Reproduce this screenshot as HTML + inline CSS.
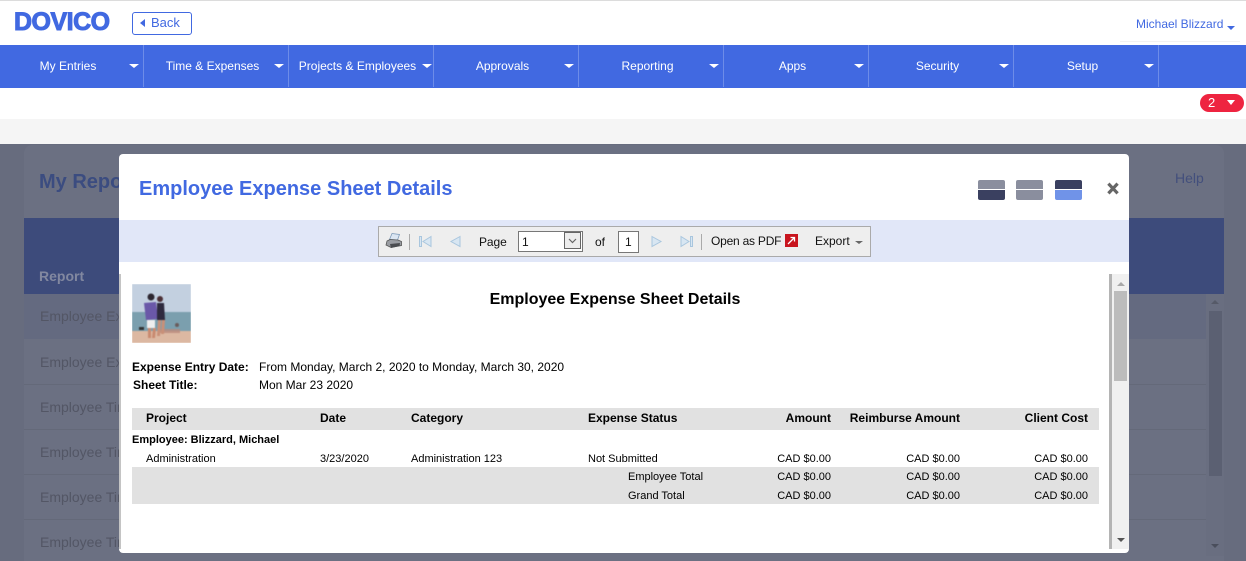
<!DOCTYPE html>
<html><head><meta charset="utf-8"><style>
html,body{margin:0;padding:0}
body{width:1246px;height:561px;overflow:hidden;position:relative;background:#fff;font-family:"Liberation Sans",sans-serif}
.a{position:absolute}
.t{position:absolute;white-space:nowrap;line-height:16px;font-size:12px}
.n{color:#fff;text-align:center;top:58px}
.c{position:absolute;top:64px;width:0;height:0;border-left:5px solid transparent;border-right:5px solid transparent;border-top:4px solid #fff}
.s{position:absolute;top:45px;width:1px;height:42px;background:#6d8ce8}
.r{color:#000;font-size:11px;text-align:right}
.h{color:#000;font-weight:bold;font-size:12px}
.l{color:#000;font-size:11px}
.row{position:absolute;left:24px;width:1200px;height:1px;background:#646979}
.e{color:#535665;font-size:14px;left:40px}
.b{letter-spacing:-.08px}
</style></head><body>
<div class="a" style="left:0;top:0;width:1246px;height:1px;background:#dcdcdc"></div>
<div class="t" style="left:14px;top:9px;font-size:25px;line-height:26px;font-weight:bold;color:#4169e1;letter-spacing:-.5px;-webkit-text-stroke:1px #4169e1">DOVICO</div>
<div class="a" style="left:132px;top:12px;width:58px;height:21px;border:1px solid #4169e1;border-radius:3px"></div>
<div class="a" style="left:140px;top:19px;width:0;height:0;border-top:4px solid transparent;border-bottom:4px solid transparent;border-right:5px solid #4169e1"></div>
<div class="t" style="left:151px;top:15px;font-size:13px;color:#4169e1">Back</div>
<div class="t" style="left:1136px;top:16px;color:#4169e1">Michael Blizzard</div>
<div class="a" style="left:1227px;top:26px;width:0;height:0;border-left:4px solid transparent;border-right:4px solid transparent;border-top:4px solid #4169e1"></div>
<div class="a" style="left:1120px;top:41px;width:120px;height:1px;background:#f2f2f2"></div>

<div class="a" style="left:0;top:45px;width:1246px;height:43px;background:#4169e1"></div>
<div class="t n" style="left:0;width:136px">My Entries</div>
<div class="t n" style="left:144px;width:137px">Time &amp; Expenses</div>
<div class="t n" style="left:289px;width:137px">Projects &amp; Employees</div>
<div class="t n" style="left:434px;width:137px">Approvals</div>
<div class="t n" style="left:579px;width:137px">Reporting</div>
<div class="t n" style="left:724px;width:137px">Apps</div>
<div class="t n" style="left:869px;width:137px">Security</div>
<div class="t n" style="left:1014px;width:137px">Setup</div>
<div class="c" style="left:129px"></div><div class="c" style="left:274px"></div><div class="c" style="left:422px"></div><div class="c" style="left:564px"></div><div class="c" style="left:709px"></div><div class="c" style="left:854px"></div><div class="c" style="left:999px"></div><div class="c" style="left:1144px"></div>
<div class="s" style="left:143px"></div><div class="s" style="left:288px"></div><div class="s" style="left:433px"></div><div class="s" style="left:578px"></div><div class="s" style="left:723px"></div><div class="s" style="left:868px"></div><div class="s" style="left:1013px"></div><div class="s" style="left:1158px"></div>

<div class="a" style="left:1200px;top:94px;width:44px;height:18px;border-radius:9px;background:#ee2440"></div>
<div class="t" style="left:1208px;top:95px;color:#fff;font-size:13px">2</div>
<div class="a" style="left:1227px;top:100px;width:0;height:0;border-left:4.5px solid transparent;border-right:4.5px solid transparent;border-top:5px solid #fff"></div>
<div class="a" style="left:0;top:119px;width:1246px;height:25px;background:#f5f5f5"></div>

<!-- dimmed background -->
<div class="a" style="left:0;top:144px;width:1246px;height:417px;background:#676c7e"></div>
<div class="a" style="left:24px;top:145px;width:1200px;height:416px;background:#6b7082;border-radius:8px 8px 0 0"></div>
<div class="t" style="left:39px;top:170px;font-size:20px;line-height:24px;font-weight:bold;color:#3b4c80">My Reports</div>
<div class="t" style="left:1175px;top:170px;font-size:14px;color:#434f7c">Help</div>
<div class="a" style="left:24px;top:218px;width:1200px;height:76px;background:#3d4b7b"></div>
<div class="t" style="left:39px;top:268px;font-size:14px;font-weight:bold;color:#8288a0">Report</div>
<div class="a" style="left:24px;top:294px;width:1182px;height:45px;background:#646a80"></div>
<div class="t e" style="top:308px">Employee Expense</div>
<div class="t e" style="top:354px">Employee Expense</div>
<div class="t e" style="top:399px">Employee Time</div>
<div class="t e" style="top:444px">Employee Time</div>
<div class="t e" style="top:489px">Employee Time</div>
<div class="t e" style="top:534px">Employee Time</div>
<div class="row" style="top:384px;width:1182px"></div><div class="row" style="top:429px;width:1182px"></div><div class="row" style="top:474px;width:1182px"></div><div class="row" style="top:519px;width:1182px"></div>
<div class="a" style="left:1206px;top:294px;width:18px;height:262px;background:#696e80"></div>
<div class="a" style="left:1209px;top:311px;width:13px;height:165px;background:#5b6072"></div>
<div class="a" style="left:1211px;top:300px;width:0;height:0;border-left:4px solid transparent;border-right:4px solid transparent;border-bottom:4px solid #565a68"></div>
<div class="a" style="left:1211px;top:544px;width:0;height:0;border-left:4px solid transparent;border-right:4px solid transparent;border-top:4px solid #4a4e5c"></div>

<!-- modal -->
<div class="a" style="left:119px;top:154px;width:1010px;height:399px;background:#fff;border-radius:4px;overflow:hidden">
<div class="a" style="left:0;top:66px;width:1010px;height:42px;background:#e1e7f8"></div>
<div class="a" style="left:0;top:120px;width:2px;height:275px;background:#c4c4c4"></div>
</div>
<div class="t" style="left:139px;top:177px;font-size:20px;line-height:24px;font-weight:bold;color:#4169e1">Employee Expense Sheet Details</div>

<div class="a" style="left:978px;top:180px;width:27px;height:9px;background:#8a8e9e;border-radius:2px 2px 0 0"></div>
<div class="a" style="left:978px;top:190px;width:27px;height:10px;background:#3a4060;border-radius:0 0 2px 2px"></div>
<div class="a" style="left:1016px;top:180px;width:27px;height:9px;background:#8a8e9e;border-radius:2px 2px 0 0"></div>
<div class="a" style="left:1016px;top:190px;width:27px;height:10px;background:#8a8e9e;border-radius:0 0 2px 2px"></div>
<div class="a" style="left:1055px;top:180px;width:27px;height:9px;background:#3a4060;border-radius:2px 2px 0 0"></div>
<div class="a" style="left:1055px;top:190px;width:27px;height:10px;background:#7093e8;border-radius:0 0 2px 2px"></div>
<svg class="a" style="left:1107px;top:182px" width="12" height="13" viewBox="0 0 12 13"><path d="M2.500 2.800L9.500 10.200M9.500 2.800L2.500 10.200" stroke="#666" stroke-width="3.200" stroke-linecap="square"/></svg>

<!-- toolbar -->
<div class="a" style="left:378px;top:226px;width:491px;height:29px;background:#eee;border:1px solid #aaa"></div>
<svg class="a" style="left:385px;top:233px" width="18" height="16" viewBox="0 0 18 16"><path d="M7 .5L14.500 1.500L12.500 7L4.500 6.500Z" fill="#dbe6f2" stroke="#7d9ab8" stroke-width=".8"/><path d="M2 8L5 6.500L13 7L16.500 8.500L16.500 12.500L6 14.500L1 12Z" fill="#9a9da3" stroke="#555" stroke-width=".8"/><path d="M5 11L15 10L14.500 13L6 15Z" fill="#4a4c50"/></svg>
<div class="a" style="left:409px;top:234px;width:1px;height:16px;background:#aaa"></div>
<svg class="a" style="left:418px;top:235px" width="15" height="13" viewBox="0 0 15 13"><path d="M1.500 1.500V11.500H3.500V1.500ZM13 1.500L5 6.500L13 11.500Z" fill="#d8e6f2" stroke="#a9c6de"/></svg>
<svg class="a" style="left:449px;top:235px" width="13" height="13" viewBox="0 0 13 13"><path d="M11 1.500L2 6.500L11 11.500Z" fill="#d8e6f2" stroke="#a9c6de"/></svg>
<div class="t b" style="left:479px;top:234px;color:#111">Page</div>
<div class="a" style="left:518px;top:231px;width:63px;height:19px;background:#fff;border:1px solid #777"></div>
<div class="t" style="left:522px;top:234px;color:#111">1</div>
<div class="a" style="left:564px;top:232px;width:17px;height:17px;background:#ededed;border:1px solid #666;box-sizing:border-box"></div>
<svg class="a" style="left:568px;top:238px" width="9" height="6" viewBox="0 0 9 6"><path d="M1 1L4.500 4.500L8 1" fill="none" stroke="#666" stroke-width="1.200"/></svg>
<div class="t" style="left:595px;top:234px;color:#111">of</div>
<div class="a" style="left:618px;top:231px;width:19px;height:20px;background:#fff;border:1px solid #777"></div>
<div class="t" style="left:625px;top:234px;color:#111">1</div>
<svg class="a" style="left:650px;top:235px" width="13" height="13" viewBox="0 0 13 13"><path d="M2 1.500L11 6.500L2 11.500Z" fill="#d8e6f2" stroke="#a9c6de"/></svg>
<svg class="a" style="left:679px;top:235px" width="15" height="13" viewBox="0 0 15 13"><path d="M2 1.500L10 6.500L2 11.500ZM11.500 1.500V11.500H13.500V1.500Z" fill="#d8e6f2" stroke="#a9c6de"/></svg>
<div class="a" style="left:701px;top:234px;width:1px;height:16px;background:#aaa"></div>
<div class="t" style="left:711px;top:233px;color:#111;letter-spacing:-.22px">Open as PDF</div>
<svg class="a" style="left:785px;top:234px" width="13" height="13" viewBox="0 0 13 13"><rect x="0" y="0" width="13" height="13" fill="#c8141e"/><path d="M3 10L9 4M5.500 3.500H9.500V7.500" stroke="#fff" stroke-width="1.300" fill="none"/></svg>
<div class="t" style="left:815px;top:233px;color:#111">Export</div>
<div class="a" style="left:855px;top:241px;width:0;height:0;border-left:4px solid transparent;border-right:4px solid transparent;border-top:3.500px solid #666"></div>

<!-- scrollbar -->
<div class="a" style="left:1109px;top:274px;width:3px;height:275px;background:#b4b4b4"></div>
<div class="a" style="left:1112px;top:274px;width:17px;height:275px;background:#f0f0f0"></div>
<div class="a" style="left:1114px;top:291px;width:13px;height:90px;background:#bcbcbc"></div>
<div class="a" style="left:1117px;top:282px;width:0;height:0;border-left:4px solid transparent;border-right:4px solid transparent;border-bottom:4px solid #a8a8a8"></div>
<div class="a" style="left:1117px;top:538px;width:0;height:0;border-left:4px solid transparent;border-right:4px solid transparent;border-top:4px solid #555"></div>

<!-- report -->
<div class="a" style="left:132px;top:284px;width:59px;height:59px;overflow:hidden">
<svg style="display:block;filter:blur(.6px)" width="59" height="59" viewBox="0 0 59 59">
<rect x="-2" y="-2" width="63" height="31" fill="#c3d0e0"/><rect x="-2" y="28" width="63" height="20" fill="#7b9fae"/><rect x="-2" y="47" width="63" height="14" fill="#dcb8a2"/>
<rect x="26" y="45" width="22" height="4" fill="#b98a7c" opacity=".8"/>
<circle cx="19" cy="13" r="3.500" fill="#2c2630"/><path d="M12 19L24 18L26 35L14 36Z" fill="#6a58a8"/><rect x="15" y="36" width="8" height="8" fill="#eee"/><path d="M16 44L19 44L19 54L16 54ZM21 44L24 44L23 54L20 54Z" fill="#c98a70"/>
<circle cx="28" cy="15" r="3" fill="#4c3036"/><path d="M25 19L32 19L33 36L25 36Z" fill="#2e2a3e"/><path d="M26 36L29 36L28 52L25 52ZM30 36L33 36L32 50L29 50Z" fill="#c99078"/>
<circle cx="45" cy="41" r="2" fill="#6a5c5c"/><rect x="7" y="43" width="5" height="3" fill="#333"/>
</svg></div>
<div class="t" style="left:120px;top:292px;width:990px;text-align:center;font-size:16px;line-height:16px;font-weight:bold;color:#000">Employee Expense Sheet Details</div>
<div class="t h" style="left:132px;top:359px">Expense Entry Date:</div>
<div class="t" style="left:259px;top:359px;color:#000">From Monday, March 2, 2020 to Monday, March 30, 2020</div>
<div class="t h" style="left:133px;top:377px">Sheet Title:</div>
<div class="t" style="left:259px;top:377px;color:#000">Mon Mar 23 2020</div>

<div class="a" style="left:132px;top:408px;width:967px;height:22px;background:#e1e1e1"></div>
<div class="t h" style="left:146px;top:410px">Project</div>
<div class="t h" style="left:320px;top:410px">Date</div>
<div class="t h" style="left:411px;top:410px">Category</div>
<div class="t h" style="left:588px;top:410px">Expense Status</div>
<div class="t h" style="right:415px;top:410px">Amount</div>
<div class="t h" style="right:286px;top:410px">Reimburse Amount</div>
<div class="t h" style="right:158px;top:410px">Client Cost</div>

<div class="t" style="left:132px;top:432px;font-size:11px;font-weight:bold;color:#000">Employee: Blizzard, Michael</div>
<div class="t l" style="left:146px;top:451px">Administration</div>
<div class="t l" style="left:320px;top:451px">3/23/2020</div>
<div class="t l" style="left:411px;top:451px">Administration 123</div>
<div class="t l" style="left:588px;top:451px">Not Submitted</div>
<div class="t r" style="right:415px;top:451px">CAD $0.00</div>
<div class="t r" style="right:286px;top:451px">CAD $0.00</div>
<div class="t r" style="right:158px;top:451px">CAD $0.00</div>

<div class="a" style="left:132px;top:467px;width:967px;height:37px;background:#e1e1e1"></div>
<div class="t l" style="left:628px;top:469px">Employee Total</div>
<div class="t r" style="right:415px;top:469px">CAD $0.00</div>
<div class="t r" style="right:286px;top:469px">CAD $0.00</div>
<div class="t r" style="right:158px;top:469px">CAD $0.00</div>
<div class="t l" style="left:628px;top:488px">Grand Total</div>
<div class="t r" style="right:415px;top:488px">CAD $0.00</div>
<div class="t r" style="right:286px;top:488px">CAD $0.00</div>
<div class="t r" style="right:158px;top:488px">CAD $0.00</div>
</body></html>
